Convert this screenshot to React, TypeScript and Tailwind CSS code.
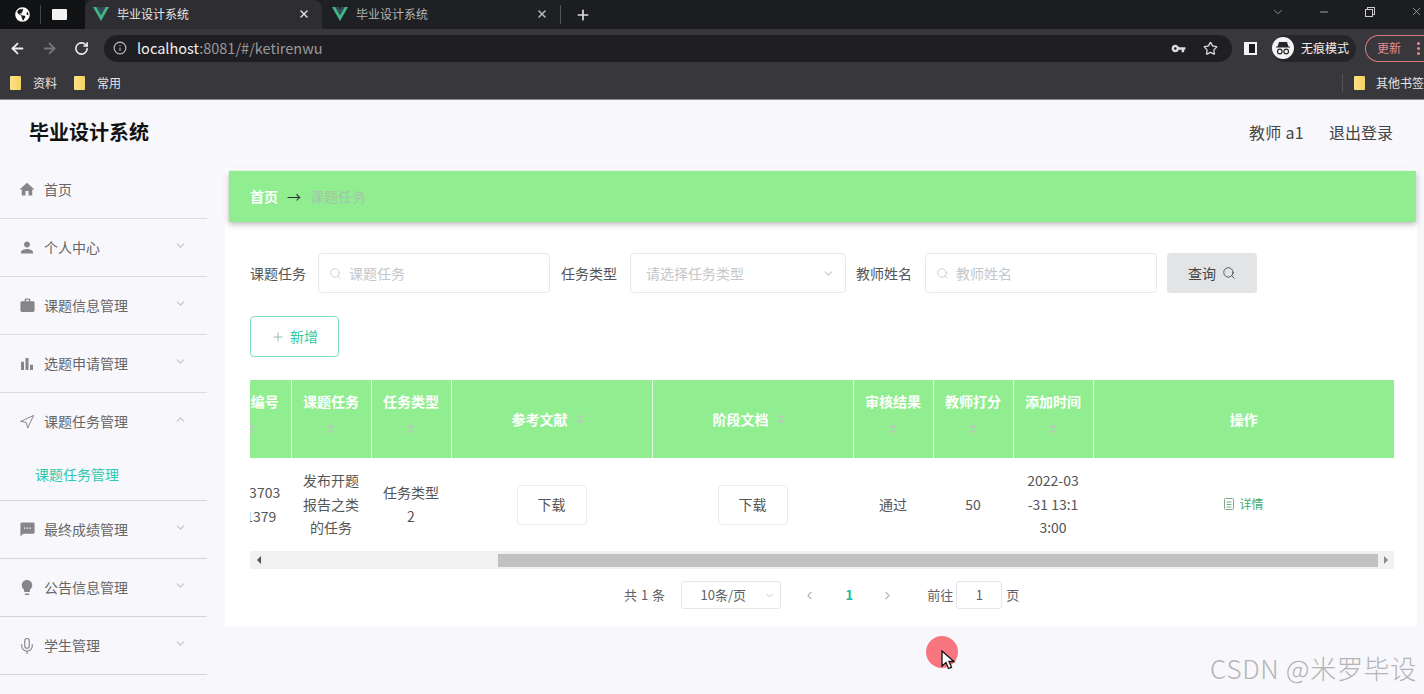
import { ChevronDown, ChevronLeft, ChevronRight, ChevronUp, Info, Minus, Mic, Navigation, Plus, Search, Star, X, ArrowLeft, ArrowRight, RotateCw } from "lucide-react";
import { MdHome, MdPerson, MdWork, MdBarChart, MdSms, MdLightbulb, MdVpnKey } from "react-icons/md";
import { FaGlobeAmericas } from "react-icons/fa";

const MENU = [
  { title: "个人中心", icon: <MdPerson size={21} /> },
  { title: "课题信息管理", icon: <MdWork size={17} /> },
  { title: "选题申请管理", icon: <MdBarChart size={24} /> },
];

const MENU_AFTER = [
  { title: "最终成绩管理", icon: <MdSms size={17} /> },
  { title: "公告信息管理", icon: <MdLightbulb size={21} /> },
  { title: "学生管理", icon: <Mic size={18} strokeWidth={1.5} /> },
];

function VueLogo() {
  return (
    <svg width="16" height="14" viewBox="0 0 256 221" aria-hidden="true">
      <path fill="#41b883" d="M204.8 0H256L128 220.8 0 0h97.9L128 51.2 157.4 0z" />
      <path fill="#34495e" d="M50.1 0L128 134.4 205.3 0h-47.9L128 51.2 97.9 0z" />
    </svg>
  );
}

function Folder() {
  return <span className="block h-[14px] w-[11px] rounded-[1px] bg-gradient-to-r from-[#fbe38a] to-[#f5d25e]" />;
}

function IncognitoBadge() {
  return (
    <svg width="22" height="22" viewBox="0 0 22 22" aria-hidden="true">
      <circle cx="11" cy="11" r="11" fill="#f4f4f4" />
      <path fill="#26262a" d="M7 5h8l1.4 4.4H18v1.2H4V9.400h1.600z" />
      <circle cx="7.800" cy="14.500" r="2.300" fill="none" stroke="#26262a" strokeWidth="1.200" />
      <circle cx="14.200" cy="14.500" r="2.300" fill="none" stroke="#26262a" strokeWidth="1.200" />
    </svg>
  );
}

function SortCaret() {
  return (
    <span className="inline-flex flex-col items-center gap-[2px] align-middle">
      <span className="h-0 w-0 border-x-[3px] border-b-[4px] border-x-transparent border-b-[#b9c7bd]" />
      <span className="h-0 w-0 border-x-[3px] border-t-[4px] border-x-transparent border-t-[#b9c7bd]" />
    </span>
  );
}

function DetailIcon() {
  return (
    <svg width="12" height="12" viewBox="0 0 12 12" fill="none" stroke="#7ca88c" strokeWidth="1" aria-hidden="true">
      <rect x="1.500" y="0.500" width="9" height="11" rx="1" />
      <path d="M3.500 4h5M3.500 6.500h5M3.500 9h5" />
    </svg>
  );
}

function BrowserChrome() {
  return (
    <div className="h-[100px] shrink-0 border-b border-[#8a8a8a] bg-[#38373b] text-white">
      <div className="flex h-[29px] items-stretch bg-[#1c1d20]">
        <div className="flex w-[85px] items-center bg-[#111214]">
          <FaGlobeAmericas size={15} className="ml-[15px]" />
          <span className="ml-[10px] h-[19px] w-px bg-[#444]" />
          <span className="ml-[11px] h-[11px] w-[15px] rounded-[1px] bg-[#f2f2f2]" />
        </div>
        <div className="flex w-[237px] items-center rounded-t-lg bg-[#2e2d31] pb-[1px] pl-[8px] pr-[12px]">
          <VueLogo />
          <span className="ml-[8px] flex-1 text-[12px] text-[#e8e8e8]">毕业设计系统</span>
          <X size={12} strokeWidth={3} className="text-[#ddd]" />
        </div>
        <div className="flex w-[238px] items-center bg-[#1f2024] pb-[1px] pl-[10px] pr-[12px]">
          <VueLogo />
          <span className="ml-[8px] flex-1 text-[12px] text-[#b4b4b4]">毕业设计系统</span>
          <X size={12} strokeWidth={3} className="text-[#bbb]" />
        </div>
        <span className="my-[5px] w-px bg-[#555]" />
        <Plus size={16} strokeWidth={2.5} className="ml-[14px] self-center text-[#ddd]" />
        <div className="ml-auto flex items-center pr-[1px] text-[#ccc]">
          <ChevronDown size={14} strokeWidth={1.5} className="mr-[33px] mb-[6px] text-[#999]" />
          <Minus size={12} strokeWidth={1.5} className="mr-[35px] mb-[6px]" />
          <span className="relative mr-[35px] mb-[6px] h-[10px] w-[10px]">
            <span className="absolute top-0 right-0 h-[8px] w-[8px] border border-[#ccc]" />
            <span className="absolute bottom-0 left-0 h-[8px] w-[8px] border border-[#ccc] bg-[#1c1d20]" />
          </span>
          <X size={13} strokeWidth={1.25} className="mb-[6px]" />
        </div>
      </div>
      <div className="flex h-[38px] items-center pl-[9px]">
        <ArrowLeft size={17} strokeWidth={2.5} className="text-[#eee]" />
        <ArrowRight size={17} strokeWidth={2.5} className="ml-[15px] text-[#777]" />
        <RotateCw size={15} strokeWidth={2.5} className="ml-[16px] text-[#eee]" />
        <div className="ml-[15px] flex h-[27px] w-[1128px] items-center rounded-full bg-[#1f1e22] pl-[9px] pr-[14px]">
          <Info size={14} className="text-[#bbb]" />
          <span className="ml-[10px] flex-1 text-[14.500px] text-[#f0f0f0]">
            localhost<span className="text-[#9a9a9a]">:8081/#/ketirenwu</span>
          </span>
          <MdVpnKey size={15} className="text-[#ddd]" />
          <Star size={15} className="ml-[17px] text-[#ddd]" />
        </div>
        <span className="ml-[12px] flex h-[13px] w-[13px] justify-end border-2 border-[#f2f2f2] bg-[#f2f2f2]">
          <span className="h-full w-[6px] bg-[#1c1c1f]" />
        </span>
        <div className="ml-[15px] flex h-[27px] w-[84px] items-center rounded-full bg-[#26252a]">
          <IncognitoBadge />
          <span className="ml-[7px] text-[12px] text-[#eee]">无痕模式</span>
        </div>
        <div className="ml-[9px] flex h-[27px] flex-1 items-center rounded-l-full border border-r-0 border-[#d9787c] pl-[11px]">
          <span className="text-[12px] text-[#e88a8a]">更新</span>
          <span className="ml-[16px] flex flex-col gap-[2px]">
            <span className="h-[3px] w-[3px] rounded-full bg-[#e88a8a]" />
            <span className="h-[3px] w-[3px] rounded-full bg-[#e88a8a]" />
            <span className="h-[3px] w-[3px] rounded-full bg-[#e88a8a]" />
          </span>
        </div>
      </div>
      <div className="flex h-[32px] items-center pb-[1px] pl-[10px] text-[12px] text-[#e6e6e6]">
        <Folder />
        <span className="ml-[12px]">资料</span>
        <span className="ml-[17px]"><Folder /></span>
        <span className="ml-[12px]">常用</span>
        <span className="ml-auto h-[18px] w-px bg-[#555]" />
        <span className="ml-[11px]"><Folder /></span>
        <span className="ml-[11px] w-[48px] overflow-hidden whitespace-nowrap">其他书签</span>
      </div>
    </div>
  );
}

function MenuRow({ title, icon, arrow = true, up, first }: { title: string; icon: React.ReactNode; arrow?: boolean; up?: boolean; first?: boolean }) {
  return (
    <div className={`flex ${first ? "h-[58px]" : "h-[57px]"} items-center pl-[18px] pr-[20px] text-[14px] text-[#666]`}>
      <span className="flex w-[18px] justify-center text-[#85858a]">{icon}</span>
      <span className="ml-[8px] flex-1">{title}</span>
      {arrow &&
        (up ? (
          <ChevronUp size={13} className="mb-[4px] text-[#c0c4cc]" />
        ) : (
          <ChevronDown size={13} className="mb-[4px] text-[#c0c4cc]" />
        ))}
    </div>
  );
}

function Sidebar() {
  return (
    <aside className="w-[207px] shrink-0">
      <div className="border-b border-[#dcdce0]">
        <MenuRow title="首页" icon={<MdHome size={21} />} arrow={false} first />
      </div>
      {MENU.map((item) => (
        <div key={item.title} className="border-b border-[#dcdce0]">
          <MenuRow title={item.title} icon={item.icon} />
        </div>
      ))}
      <div className="border-b border-[#d4d4d8]">
        <MenuRow title="课题任务管理" icon={<Navigation size={16} strokeWidth={1.5} />} up />
        <div className="h-[50px] pl-[35px] pt-[14px] text-[14px] text-[#2fc9ae]">课题任务管理</div>
      </div>
      {MENU_AFTER.map((item) => (
        <div key={item.title} className="border-b border-[#d4d4d8]">
          <MenuRow title={item.title} icon={item.icon} />
        </div>
      ))}
    </aside>
  );
}

function SearchInput({ placeholder }: { placeholder: string }) {
  return (
    <div className="flex h-[40px] w-[232px] items-center rounded-[4px] border border-[#e8e9ec] bg-white pl-[10px] text-[14px] text-[#c4c7cc]">
      <Search size={13} strokeWidth={1.5} />
      <span className="ml-[7px]">{placeholder}</span>
    </div>
  );
}

function HeadCell({ children, width, wrap, last }: { children: React.ReactNode; width: string; wrap?: boolean; last?: boolean }) {
  return (
    <th className={`${width} ${last ? "" : "border-r border-[#e6f8e6]"} px-[10px] text-center align-middle text-[14px] font-bold leading-[20px] text-white`}>
      {wrap ? (
        <div className="mb-[14px] flex flex-col items-center gap-[13px]">
          <span className="whitespace-nowrap">{children}</span>
          <SortCaret />
        </div>
      ) : (
        <span className="inline-flex items-center">
          {children}
          {!last && (
            <span className="flex w-[24px] justify-center">
              <SortCaret />
            </span>
          )}
        </span>
      )}
    </th>
  );
}

function DownloadButton() {
  return <button className="h-[40px] w-[70px] rounded-[4px] border border-[#ebebeb] bg-white text-[14px] text-[#555]">下载</button>;
}

function DataTable() {
  return (
    <div className="overflow-hidden">
      <table className="ml-[-39px] w-[1183px] table-fixed border-collapse">
        <thead>
          <tr className="h-[78px] bg-[#90ee90]">
            <HeadCell width="w-[80px]" wrap>任务编号</HeadCell>
            <HeadCell width="w-[80px]" wrap>课题任务</HeadCell>
            <HeadCell width="w-[80px]" wrap>任务类型</HeadCell>
            <HeadCell width="w-[201px]">参考文献</HeadCell>
            <HeadCell width="w-[201px]">阶段文档</HeadCell>
            <HeadCell width="w-[80px]" wrap>审核结果</HeadCell>
            <HeadCell width="w-[80px]" wrap>教师打分</HeadCell>
            <HeadCell width="w-[80px]" wrap>添加时间</HeadCell>
            <HeadCell width="w-[301px]" last>操作</HeadCell>
          </tr>
        </thead>
        <tbody>
          <tr className="h-[93px] text-center text-[14px] leading-[23.500px] text-[#555]">
            <td className="pl-[14px] pr-[10px] whitespace-nowrap">1643703<br />161379</td>
            <td className="px-[10px]">发布开题报告之类的任务</td>
            <td className="px-[10px]">任务类型2</td>
            <td><DownloadButton /></td>
            <td><DownloadButton /></td>
            <td className="px-[10px]">通过</td>
            <td className="px-[10px]">50</td>
            <td className="whitespace-nowrap">2022-03<br />-31 13:1<br />3:00</td>
            <td>
              <span className="inline-flex items-center gap-[4px] text-[12px] text-[#3aa96f]">
                <DetailIcon />
                详情
              </span>
            </td>
          </tr>
        </tbody>
      </table>
    </div>
  );
}

function ScrollBar() {
  return (
    <div className="flex h-[18px] items-center bg-[#f1f1f1]">
      <span className="flex w-[17px] justify-center">
        <span className="h-0 w-0 border-y-[4px] border-r-[4px] border-y-transparent border-r-[#505050]" />
      </span>
      <span className="ml-[231px] h-[13px] flex-1 bg-[#c1c1c1]" />
      <span className="flex w-[16px] justify-center">
        <span className="h-0 w-0 border-y-[4px] border-l-[4px] border-y-transparent border-l-[#8a8a8a]" />
      </span>
    </div>
  );
}

function Pagination() {
  return (
    <div className="mt-[12px] flex h-[28px] items-center pl-[374px] text-[13px] text-[#606266]">
      <span className="tracking-[0.5px]">共 1 条</span>
      <div className="ml-[15px] flex h-[28px] w-[100px] items-center rounded-[3px] border border-[#e4e6ea] pl-[19px] pr-[5px]">
        <span className="flex-1">10条/页</span>
        <ChevronDown size={11} className="text-[#c0c4cc]" />
      </div>
      <ChevronLeft size={13} className="ml-[22px] text-[#b4b7bc]" />
      <span className="ml-[30px] font-bold text-[#1abc9c]">1</span>
      <ChevronRight size={13} className="ml-[28px] text-[#b4b7bc]" />
      <span className="ml-[33px]">前往</span>
      <div className="ml-[3px] flex h-[28px] w-[46px] items-center justify-center rounded-[3px] border border-[#e4e6ea]">1</div>
      <span className="ml-[4px]">页</span>
    </div>
  );
}

export default function App() {
  return (
    <div className="relative flex h-[694px] w-[1424px] flex-col overflow-hidden bg-[#f8f8fc] font-['Noto_Sans_CJK_SC','Noto_Sans',sans-serif]">
      <BrowserChrome />

      <header className="flex h-[60px] shrink-0 items-center justify-between pl-[29px] pr-[31px] pt-[4px]">
        <h1 className="text-[20px] font-bold text-[#111]">毕业设计系统</h1>
        <div className="flex gap-[25px] text-[16px] text-[#444]">
          <span className="tracking-[0.3px]">教师 a1</span>
          <span>退出登录</span>
        </div>
      </header>

      <div className="flex flex-1">
        <Sidebar />
        <main className="ml-[18px] mt-[8px] h-[459px] w-[1192px] bg-white pt-[3px]">
          <div className="ml-[4px] flex h-[51px] w-[1187px] items-center bg-[#90ee90] pl-[21px] text-[14px] shadow-[0_2px_6px_rgba(0,0,0,0.3)]">
            <span className="font-bold text-white">首页</span>
            <span className="mx-[9px] text-[#333]">→</span>
            <span className="text-[#a5c4ac]">课题任务</span>
          </div>

          <div className="ml-[25px] mr-[23px]">
            <div className="mt-[31px] flex items-center text-[14px] text-[#555]">
              <span>课题任务</span>
              <div className="ml-[12px]"><SearchInput placeholder="课题任务" /></div>
              <span className="ml-[11px]">任务类型</span>
              <div className="ml-[13px] flex h-[40px] w-[216px] items-center rounded-[4px] border border-[#e8e9ec] pl-[15px] pr-[10px] text-[#c4c7cc]">
                <span className="flex-1">请选择任务类型</span>
                <ChevronDown size={13} />
              </div>
              <span className="ml-[10px]">教师姓名</span>
              <div className="ml-[13px]"><SearchInput placeholder="教师姓名" /></div>
              <button className="ml-[10px] flex h-[40px] w-[90px] items-center justify-center gap-[6px] rounded-[4px] bg-[#e2e4e6] text-[14px] text-[#444]">
                查询
                <Search size={14} strokeWidth={1.5} />
              </button>
            </div>

            <button className="mt-[23px] flex h-[41px] w-[89px] items-center justify-center gap-[5px] rounded-[4px] border border-[#7fdcb8] text-[14px] text-[#2fc9a0]">
              <Plus size={14} strokeWidth={1.5} className="text-[#7fb8a0]" />
              新增
            </button>

            <div className="mt-[23px]">
              <DataTable />
              <ScrollBar />
              <Pagination />
            </div>
          </div>
        </main>
      </div>

      {/* recording cursor */}
      <span className="absolute left-[926px] top-[636px] h-[32px] w-[32px] rounded-full bg-[#f87680]" />
      <svg className="absolute left-[941px] top-[650px]" width="15" height="21" viewBox="0 0 15 21" aria-hidden="true">
        <path d="M1 1v15l4-3.500 2.500 6 3-1.200-2.500-5.800H13z" fill="#fff" stroke="#111" strokeWidth="1.300" />
      </svg>
      <span className="absolute left-[1210px] top-[648px] text-[26px] font-light tracking-[0.7px] text-[#b4b4b4]">CSDN @米罗毕设</span>
    </div>
  );
}
